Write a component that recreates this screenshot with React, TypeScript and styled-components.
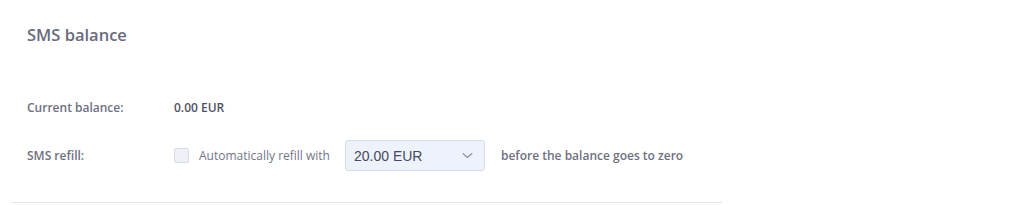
import React from "react";
import styled, { createGlobalStyle } from "styled-components";

const Global = createGlobalStyle`
  html, body { margin: 0; padding: 0; background: #ffffff; }
  body { font-family: "Open Sans", "Noto Sans", sans-serif; }
`;

const Section = styled.section`
  width: 711px;
  margin-left: 11px;
  padding: 25px 16px 31px;
  box-sizing: border-box;
  border-bottom: 1px solid #e3e6ee;
`;

const Title = styled.h2`
  margin: 0 0 53px;
  font-size: 16.5px;
  line-height: 20px;
  font-weight: 600;
  color: #696b7c;
`;

const Rows = styled.div`
  display: grid;
  grid-template-columns: 147px 1fr;
  row-gap: 22px;
  align-items: center;
`;

const Label = styled.div`
  font-size: 12px;
  line-height: 20px;
  font-weight: 600;
  color: #6e7082;
`;

const Value = styled.div`
  font-size: 12px;
  line-height: 20px;
  font-weight: 600;
  color: #4f5264;
`;

const Refill = styled.div`
  display: flex;
  align-items: center;
  height: 31px;
`;

const Check = styled.span`
  width: 15px;
  height: 15px;
  box-sizing: border-box;
  border: 1px solid #d6dbe7;
  border-radius: 2px;
  background: #eef1f8;
  margin-right: 10px;
`;

const CheckText = styled.span`
  font-size: 12px;
  font-weight: 400;
  color: #727588;
  margin-right: 15px;
`;

const Select = styled.div`
  width: 140px;
  height: 31px;
  box-sizing: border-box;
  border: 1px solid #d6dce9;
  border-radius: 3px;
  background: #eef2fa;
  display: flex;
  align-items: center;
  justify-content: space-between;
  padding: 0 11px 0 8px;
  font-family: "Liberation Sans", Arial, sans-serif;
  font-size: 14px;
  color: #454a5f;
  margin-right: 16px;
`;

const Hint = styled.span`
  font-size: 12px;
  font-weight: 600;
  color: #6e7082;
`;

export default function App() {
  return (
    <>
      <Global />
      <Section>
        <Title>SMS balance</Title>
        <Rows>
          <Label>Current balance:</Label>
          <Value>0.00 EUR</Value>
          <Label>SMS refill:</Label>
          <Refill>
            <Check />
            <CheckText>Automatically refill with</CheckText>
            <Select>
              <span>20.00 EUR</span>
              <svg width="11" height="7" viewBox="0 0 11 7" fill="none">
                <path d="M1 1.5 L5.5 5.5 L10 1.5" stroke="#8a90a3" strokeWidth="1.1" strokeLinecap="round" strokeLinejoin="round" />
              </svg>
            </Select>
            <Hint>before the balance goes to zero</Hint>
          </Refill>
        </Rows>
      </Section>
    </>
  );
}
